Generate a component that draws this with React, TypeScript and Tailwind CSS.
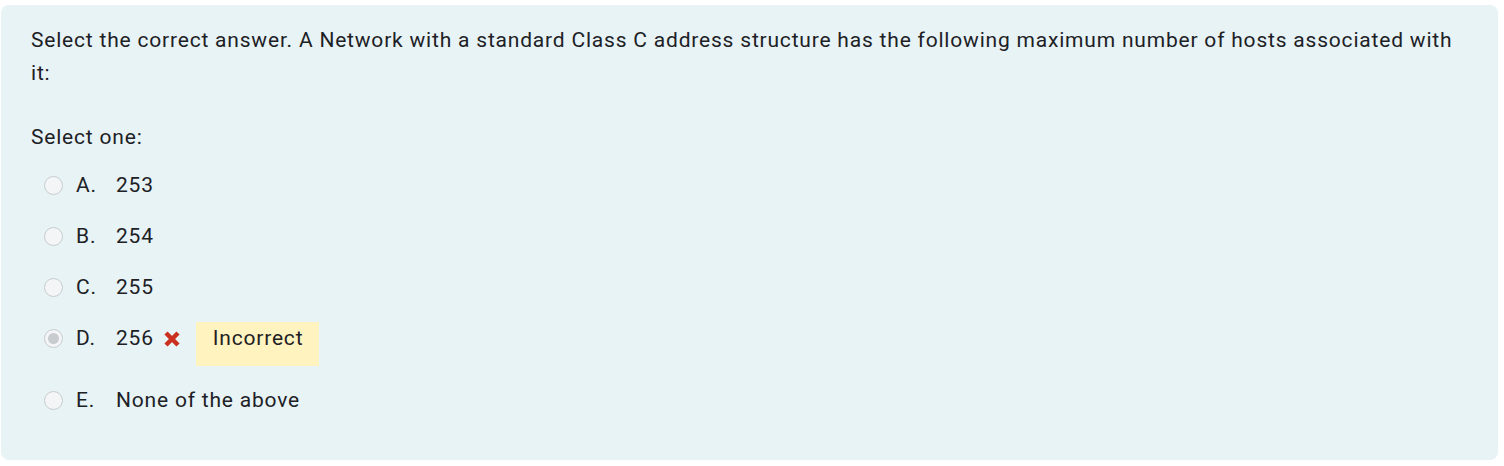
const options = [
  { letter: "A.", text: "253" },
  { letter: "B.", text: "254" },
  { letter: "C.", text: "255" },
  { letter: "D.", text: "256", chosen: true },
  { letter: "E.", text: "None of the above" },
];

function Radio({ checked }: { checked?: boolean }) {
  return (
    <span className="mt-[7px] flex h-[19px] w-[19px] shrink-0 items-center justify-center rounded-full border border-[#c8cccf] bg-[#f3f5f6]">
      {checked && <span className="h-[11px] w-[11px] rounded-full bg-[#c9cccf]" />}
    </span>
  );
}

function Cross() {
  return (
    <svg viewBox="0 0 16 16" className="mt-[9px] h-[16px] w-[16px] shrink-0">
      <path d="M2 2 L14 14 M14 2 L2 14" stroke="#ca3120" strokeWidth="4.5" strokeLinecap="butt" />
    </svg>
  );
}

export default function App() {
  return (
    <div className="h-[466px] w-[1504px] bg-white pt-[5px] pl-[1px]" style={{ fontFamily: "Roboto, 'Liberation Sans', sans-serif" }}>
      <div className="h-[455px] w-[1497px] rounded-lg bg-[#e7f3f5] pt-[19px] pl-[30px] pr-[30px] text-[21px] leading-[33px] tracking-[0.8px] text-[#1d2125]">
        <p>
          Select the correct answer. A Network with a standard Class C address structure has the following maximum number of hosts associated with it:
        </p>
        <p className="mt-[31px]">Select one:</p>
        <div className="mt-[6px]">
          {options.map((o) => (
            <div key={o.letter} className="flex items-start py-[9px] pl-[13px]">
              <Radio checked={o.chosen} />
              <span className="ml-[13px] w-[40px]">{o.letter}</span>
              <span>{o.text}</span>
              {o.chosen && (
                <>
                  <span className="ml-[10px]">
                    <Cross />
                  </span>
                  <span className="ml-[16px] h-[44px] bg-[#fff3bf] pl-[17px] pr-[16px]">Incorrect</span>
                </>
              )}
            </div>
          ))}
        </div>
      </div>
    </div>
  );
}
